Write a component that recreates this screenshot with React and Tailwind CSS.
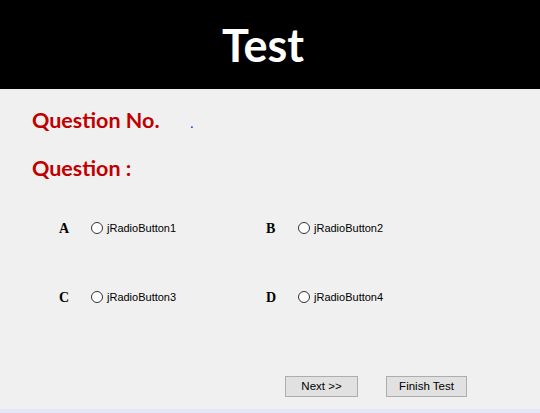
export default function App() {
  const options = [
    { letter: 'A', label: 'jRadioButton1' },
    { letter: 'B', label: 'jRadioButton2' },
    { letter: 'C', label: 'jRadioButton3' },
    { letter: 'D', label: 'jRadioButton4' },
  ];

  return (
    <div className="w-[540px] h-[413px] flex flex-col bg-[#f0f0f0] overflow-hidden">
      <div className="h-[89px] bg-black flex items-center justify-center">
        <h1 className="text-white font-bold text-[45px] leading-none pt-[2px] pr-[14px] font-['Lato',sans-serif]">Test</h1>
      </div>

      <div className="flex-1 flex flex-col px-[32px] font-['Lato',sans-serif]">
        <div className="flex items-baseline mt-[21px] h-[26px]">
          <span className="text-[#c00000] font-bold text-[21.5px] leading-none">Question No.</span>
          <span className="ml-[31px] text-[#2a2ad8] font-bold text-[11px]">.</span>
        </div>
        <div className="mt-[22px] h-[26px]">
          <span className="text-[#c00000] font-bold text-[21.5px] leading-none">Question :</span>
        </div>

        <div className="grid grid-cols-[207px_1fr] gap-y-[55px] mt-[37px] pl-[27px]">
          {options.map(opt => (
            <div key={opt.letter} className="flex items-center h-[14px]">
              <span className="w-[32px] font-bold text-[14px] font-['Liberation_Serif',serif]">{opt.letter}</span>
              <span className="w-[12px] h-[12px] rounded-full border border-[#333] bg-white" />
              <span className="ml-[4px] text-[11px] text-black font-['Liberation_Sans',sans-serif]">{opt.label}</span>
            </div>
          ))}
        </div>

        <div className="mt-auto mb-[12px] flex gap-[28px] pl-[253px]">
          <button className="w-[73px] h-[21px] border border-[#adadad] bg-[#e1e1e1] text-[11.5px] text-black font-['Liberation_Sans',sans-serif]">Next &gt;&gt;</button>
          <button className="w-[81px] h-[21px] border border-[#adadad] bg-[#e1e1e1] text-[11.5px] text-black font-['Liberation_Sans',sans-serif]">Finish Test</button>
        </div>
      </div>
      <div className="h-[4px] bg-[#e6e6fa]" />
    </div>
  );
}
